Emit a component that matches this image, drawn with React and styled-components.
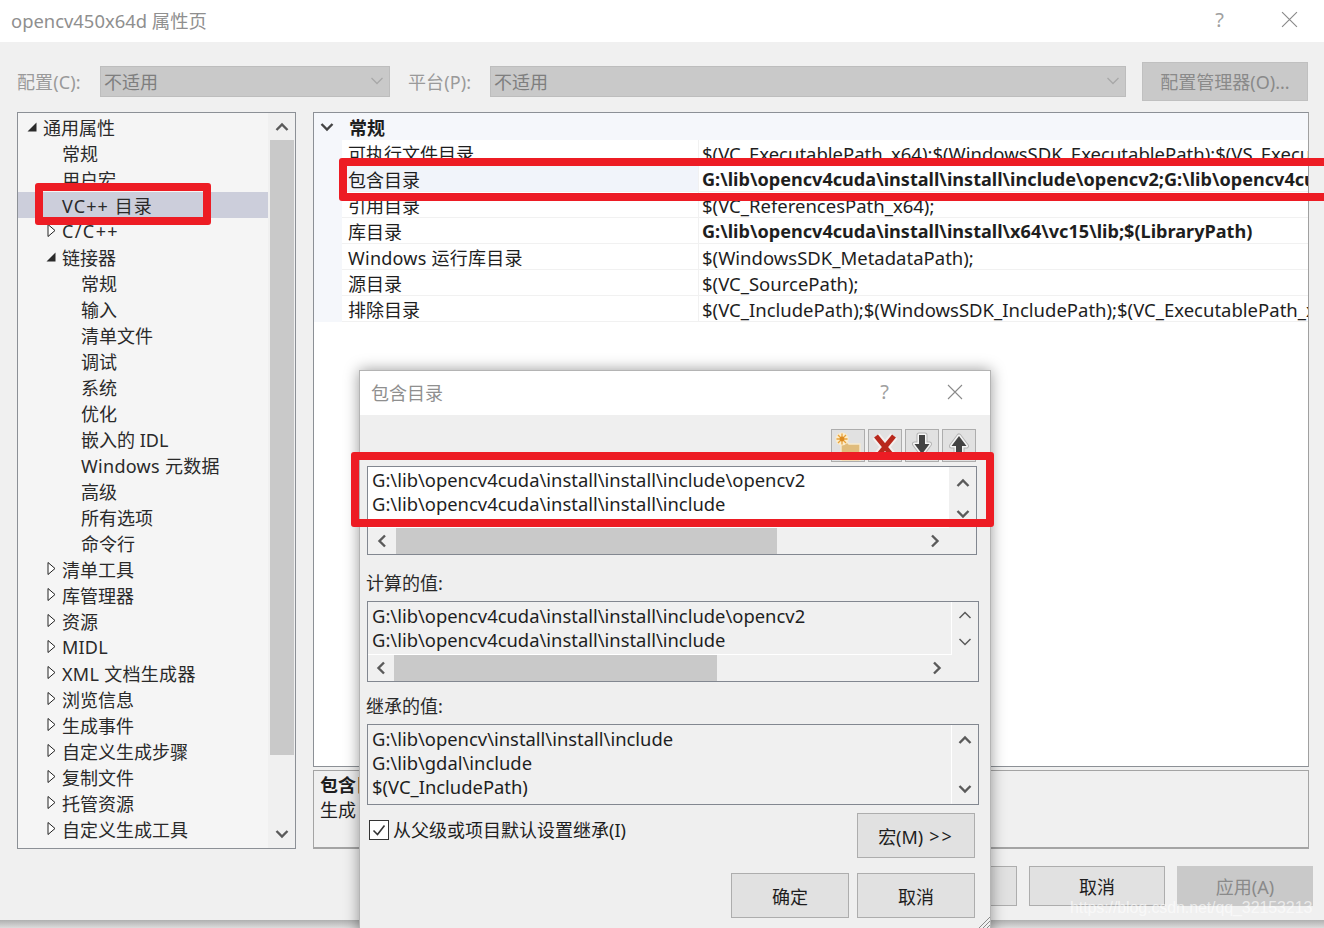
import React from 'react'
import styled, { createGlobalStyle } from 'styled-components'

const Global = createGlobalStyle`
  html, body { margin: 0; padding: 0; }
  body {
    width: 1324px;
    height: 928px;
    overflow: hidden;
    background: #d4d4d4;
    font-family: "Noto Sans", "Noto Sans CJK SC", sans-serif;
    font-size: 18px;
    color: #1e1e1e;
  }
`

const Page = styled.div`
  position: relative;
  width: 1324px;
  height: 928px;
  overflow: hidden;
`
const Window = styled.div`
  height: 920px;
  display: flex;
  flex-direction: column;
  background: #f0f0f0;
`
const WindowEdge = styled.div`
  height: 8px;
  background: linear-gradient(#b0b0b0, #dcdcdc);
`
const TitleBar = styled.div`
  height: ${p => p.$h}px;
  flex: none;
  box-sizing: border-box;
  background: #fff;
  display: flex;
  align-items: center;
  padding: 0 ${p => p.$right}px 3px ${p => p.$left}px;
  color: #8f8f8f;
  font-size: ${p => p.$size}px;
`
const TitleText = styled.span`
  flex: 1;
`
const TitleButtons = styled.div`
  display: flex;
  align-items: center;
  gap: ${p => p.$gap}px;
  color: #a0a0a0;
  font-size: 20px;
`
const ConfigRow = styled.div`
  height: 31px;
  margin-top: 24px;
  padding: 0 17px;
  display: flex;
  align-items: center;
  flex: none;
`
const ConfigLabel = styled.span`
  color: #9a9a9a;
  box-sizing: border-box;
  width: ${p => p.$w}px;
  padding: 0 0 2px ${p => p.$pad || 0}px;
  letter-spacing: 0.1px;
  flex: none;
`
const Combo = styled.div`
  width: ${p => p.$w}px;
  height: 31px;
  box-sizing: border-box;
  flex: none;
  background: #c9c9c9;
  border: 1px solid #bdbdbd;
  color: #7e7e7e;
  display: flex;
  align-items: center;
  justify-content: space-between;
  padding: 0 5px 2px 3px;
`
const ManagerButton = styled.div`
  margin-left: 16px;
  width: 166px;
  height: 39px;
  flex: none;
  background: #c9c9c9;
  border: 1px solid #c0c0c0;
  box-sizing: border-box;
  padding-bottom: 2px;
  color: #8a8a8a;
  display: flex;
  align-items: center;
  justify-content: center;
`
const MainRow = styled.div`
  margin-top: 15px;
  padding: 0 15px 0 17px;
  display: flex;
  gap: 17px;
  height: 737px;
  flex: none;
`
const Tree = styled.div`
  width: 279px;
  height: 737px;
  box-sizing: border-box;
  flex: none;
  border: 1px solid #8c9096;
  background: #f5f5f5;
  display: flex;
`
const TreeList = styled.div`
  width: 250px;
  padding-top: 1px;
  flex: none;
  overflow: hidden;
`
const TreeRow = styled.div`
  height: 26px;
  box-sizing: border-box;
  display: flex;
  align-items: center;
  white-space: nowrap;
  padding: 0 0 1px ${p => p.$indent}px;
  letter-spacing: ${p => p.$track || 0}px;
  background: ${p => (p.$selected ? '#cccedb' : 'transparent')};
  color: #2a2a2a;
`
const Caret = styled.span`
  width: 16px;
  margin-left: -19px;
  margin-right: 3px;
  display: flex;
  align-items: center;
  justify-content: center;
  flex: none;
`
const VScroll = styled.div`
  width: ${p => p.$w}px;
  flex: none;
  display: flex;
  flex-direction: column;
  align-items: center;
  justify-content: space-between;
  background: #f0f0f0;
`
const VThumb = styled.div`
  width: 24px;
  height: ${p => p.$h}px;
  margin-bottom: auto;
  background: #c9c9c9;
`
const ArrowCell = styled.div`
  height: ${p => p.$h}px;
  display: flex;
  align-items: center;
  justify-content: center;
  flex: none;
`
const RightCol = styled.div`
  width: 996px;
  flex: none;
  display: flex;
  flex-direction: column;
  gap: 3px;
`
const Grid = styled.div`
  height: 655px;
  box-sizing: border-box;
  flex: none;
  border: 1px solid #8c9096;
  border-right-color: #a0a0a0;
  background: #fff;
  overflow: hidden;
`
const GroupHead = styled.div`
  height: 27px;
  background: #f5f7fb;
  display: flex;
  align-items: center;
  font-weight: 700;
  padding-left: 6px;
  gap: 15px;
`
const GridRow = styled.div`
  height: 26px;
  box-sizing: border-box;
  display: flex;
  white-space: nowrap;
`
const Gutter = styled.div`
  width: 28px;
  flex: none;
  background: #f5f7fb;
`
const NameCell = styled.div`
  width: 356px;
  flex: none;
  padding: 1px 0 0 6px;
  box-sizing: border-box;
  line-height: 27px;
  letter-spacing: ${p => p.$track || 0}px;
  border-bottom: 1px solid #f1f1f1;
  background: ${p => (p.$active ? '#f1f4fa' : '#fff')};
`
const ValueCell = styled.div`
  flex: 1;
  min-width: 0;
  overflow: hidden;
  padding: 1px 0 0 3px;
  font-size: ${p => (p.$bold ? 18.1 : 18.5)}px;
  line-height: 25px;
  border-left: 1px solid #f1f1f1;
  border-bottom: 1px solid #f1f1f1;
  font-weight: ${p => (p.$bold ? 700 : 400)};
`
const Description = styled.div`
  height: 79px;
  box-sizing: border-box;
  border: 1px solid #a4a4a4;
  border-bottom-width: 2px;
  padding: 2px 6px;
  line-height: 25px;
  overflow: hidden;
`
const DescTitle = styled.div`
  font-weight: 700;
`
const BottomRow = styled.div`
  margin-top: 17px;
  padding-right: 11px;
  display: flex;
  justify-content: flex-end;
  gap: 12px;
`
const Button = styled.div`
  width: ${p => p.$w}px;
  height: ${p => p.$h}px;
  box-sizing: border-box;
  background: ${p => (p.$disabled ? '#c9c9c9' : '#e1e1e1')};
  border: 1px solid ${p => (p.$disabled ? '#c9c9c9' : '#adadad')};
  color: ${p => (p.$disabled ? '#8a8a8a' : '#1e1e1e')};
  display: flex;
  align-items: center;
  justify-content: center;
`
const Chevrons = styled.span`
  margin-left: 6px;
  letter-spacing: 2px;
`
const Watermark = styled.div`
  position: absolute;
  left: 1070px;
  top: 899px;
  font-family: "Liberation Sans", sans-serif;
  font-size: 16px;
  letter-spacing: -0.1px;
  color: rgba(255, 255, 255, 0.62);
  white-space: nowrap;
`

const Dialog = styled.div`
  position: absolute;
  left: 359px;
  top: 370px;
  width: 632px;
  height: 570px;
  box-sizing: border-box;
  border: 1px solid #b4b4b4;
  background: #efefef;
  box-shadow: 0 0 14px rgba(0, 0, 0, 0.4);
`
const DialogBody = styled.div`
  padding: 14px 14px 0 7px;
`
const ToolRow = styled.div`
  display: flex;
  justify-content: flex-end;
  gap: 3px;
  height: 37px;
`
const ToolButton = styled.div`
  width: 34px;
  height: 33px;
  box-sizing: border-box;
  background: #e1e1e1;
  border: 1px solid #adadad;
  display: flex;
  align-items: center;
  justify-content: center;
`
const ListBox = styled.div`
  width: ${p => p.$w}px;
  height: ${p => p.$h}px;
  box-sizing: border-box;
  border: 1px solid #828790;
  background: #f0f0f0;
  display: flex;
  flex-direction: column;
`
const ListTop = styled.div`
  flex: 1;
  min-height: 0;
  display: flex;
`
const ListLines = styled.div`
  flex: 1;
  min-width: 0;
  box-sizing: border-box;
  background: ${p => (p.$readonly ? '#f0f0f0' : '#fff')};
  padding: ${p => (p.$readonly ? 2 : 1)}px 0 0 4px;
  border-right: 1px solid ${p => (p.$readonly ? '#fff' : 'transparent')};
  border-bottom: 1px solid ${p => (p.$underline ? '#fff' : 'transparent')};
  font-size: 18.4px;
  line-height: 24px;
  white-space: nowrap;
  overflow: hidden;
`
const HScroll = styled.div`
  height: ${p => p.$h}px;
  flex: none;
  display: flex;
  align-items: center;
  background: #f0f0f0;
`
const HThumb = styled.div`
  height: 100%;
  width: ${p => p.$w}px;
  flex: none;
  background: #c9c9c9;
`
const SideArrow = styled.div`
  width: ${p => p.$w}px;
  flex: none;
  display: flex;
  align-items: center;
  justify-content: center;
`
const FieldLabel = styled.div`
  height: ${p => p.$h}px;
  box-sizing: border-box;
  margin-left: -1px;
  padding-bottom: 5px;
  display: flex;
  align-items: flex-end;
  line-height: 26px;
  color: #2a2a2a;
`
const CheckRow = styled.div`
  display: flex;
  justify-content: space-between;
  padding: 8px 1px 0 2px;
  height: 53px;
  box-sizing: border-box;
`
const CheckLabel = styled.label`
  display: flex;
  align-items: flex-start;
  gap: 4px;
  line-height: 20px;
  padding-top: 7px;
`
const CheckBox = styled.span`
  width: 20px;
  height: 20px;
  box-sizing: border-box;
  border: 1px solid #333;
  background: #fff;
  display: flex;
  align-items: center;
  justify-content: center;
`
const DialogButtons = styled.div`
  display: flex;
  justify-content: flex-end;
  gap: 8px;
  margin-top: 15px;
  padding-right: 1px;
`
const Grip = styled.svg`
  position: absolute;
  left: 978px;
  top: 916px;
`
const Marker = styled.div`
  position: absolute;
  left: ${p => p.$x}px;
  top: ${p => p.$y}px;
  width: ${p => p.$w}px;
  height: ${p => p.$h}px;
  box-sizing: border-box;
  border: 8px solid #ed1c24;
  border-radius: 3px;
`

const Up = ({ color = '#5a5a5a', weight = 2.4 }) => (
  <svg width="14" height="10" viewBox="0 0 14 10">
    <path d="M1.5 8 7 2.5 12.5 8" fill="none" stroke={color} strokeWidth={weight} />
  </svg>
)
const Down = ({ color = '#5a5a5a', weight = 2.4 }) => (
  <svg width="14" height="10" viewBox="0 0 14 10">
    <path d="M1.5 2 7 7.5 12.5 2" fill="none" stroke={color} strokeWidth={weight} />
  </svg>
)
const Left = () => (
  <svg width="10" height="14" viewBox="0 0 10 14">
    <path d="M8 1.5 2.5 7 8 12.5" fill="none" stroke="#5a5a5a" strokeWidth="2.4" />
  </svg>
)
const Right = () => (
  <svg width="10" height="14" viewBox="0 0 10 14">
    <path d="M2 1.5 7.5 7 2 12.5" fill="none" stroke="#5a5a5a" strokeWidth="2.4" />
  </svg>
)
const Closed = () => (
  <svg width="9" height="15" viewBox="0 0 9 15">
    <path d="M1 1.5 8 7.5 1 13.5Z" fill="#fff" stroke="#222" strokeWidth="1" />
  </svg>
)
const Open = () => (
  <svg width="10" height="10" viewBox="0 0 10 10">
    <path d="M9.5 0.5V9.5H0.5Z" fill="#2a2a2a" />
  </svg>
)
const CloseX = ({ size, color }) => (
  <svg width={size} height={size} viewBox="0 0 16 16">
    <path d="M1 1 15 15M15 1 1 15" stroke={color} strokeWidth="1.1" fill="none" />
  </svg>
)

const NewFolder = () => (
  <svg width="30" height="30" viewBox="0 0 30 30">
    <path d="M8 11h6l2 2h11v17H8Z" fill="#e0bc7c" stroke="#f6ead0" strokeWidth="1.4" />
    <circle cx="9" cy="8" r="6.5" fill="#fbeccb" />
    <path d="M9 2.5v11M3.5 8h11M5 4l8 8M13 4l-8 8" stroke="#e8a33c" strokeWidth="1.3" />
    <circle cx="9" cy="8" r="2.4" fill="#dd8a20" />
  </svg>
)
const Delete = () => (
  <svg width="30" height="30" viewBox="0 0 30 30">
    <path d="M6 5 24 27M24 5 6 27" stroke="#f4f0ee" strokeWidth="9" fill="none" />
    <path d="M6 5 24 27M24 5 6 27" stroke="#b8281c" strokeWidth="5" fill="none" />
  </svg>
)
const downArrow = 'M7 3h6v9h4.500L10 22 2.500 12H7Z'
const upArrow = 'M7 28V14H2.500L10 4l7.500 10H13v14Z'
const HaloArrow = ({ d }) => (
  <svg width="20" height="28" viewBox="0 0 20 28">
    <path d={d} fill="none" stroke="#b4b4b4" strokeWidth="5" strokeLinejoin="round" />
    <path d={d} fill="none" stroke="#f6f6f6" strokeWidth="3" strokeLinejoin="round" />
    <path d={d} fill="#444" />
  </svg>
)

const tree = [
  { t: '通用属性', i: 25, open: true },
  { t: '常规', i: 44 },
  { t: '用户宏', i: 44 },
  { t: 'VC++ 目录', i: 44, selected: true, track: 1.1 },
  { t: 'C/C++', i: 44, closed: true, track: 1.4 },
  { t: '链接器', i: 44, open: true },
  { t: '常规', i: 63 },
  { t: '输入', i: 63 },
  { t: '清单文件', i: 63 },
  { t: '调试', i: 63 },
  { t: '系统', i: 63 },
  { t: '优化', i: 63 },
  { t: '嵌入的 IDL', i: 63 },
  { t: 'Windows 元数据', i: 63, track: 0.3 },
  { t: '高级', i: 63 },
  { t: '所有选项', i: 63 },
  { t: '命令行', i: 63 },
  { t: '清单工具', i: 44, closed: true },
  { t: '库管理器', i: 44, closed: true },
  { t: '资源', i: 44, closed: true },
  { t: 'MIDL', i: 44, closed: true, track: 0.2 },
  { t: 'XML 文档生成器', i: 44, closed: true, track: 0.3 },
  { t: '浏览信息', i: 44, closed: true },
  { t: '生成事件', i: 44, closed: true },
  { t: '自定义生成步骤', i: 44, closed: true },
  { t: '复制文件', i: 44, closed: true },
  { t: '托管资源', i: 44, closed: true },
  { t: '自定义生成工具', i: 44, closed: true },
]

const rows = [
  { n: '可执行文件目录', v: '$(VC_ExecutablePath_x64);$(WindowsSDK_ExecutablePath);$(VS_ExecutablePath);$(MSBuild_ExecutablePath)' },
  { n: '包含目录', v: 'G:\\lib\\opencv4cuda\\install\\install\\include\\opencv2;G:\\lib\\opencv4cuda\\install\\install\\include;$(IncludePath)', bold: true, active: true },
  { n: '引用目录', v: '$(VC_ReferencesPath_x64);' },
  { n: '库目录', v: 'G:\\lib\\opencv4cuda\\install\\install\\x64\\vc15\\lib;$(LibraryPath)', bold: true },
  { n: 'Windows 运行库目录', v: '$(WindowsSDK_MetadataPath);', track: 0.25 },
  { n: '源目录', v: '$(VC_SourcePath);' },
  { n: '排除目录', v: '$(VC_IncludePath);$(WindowsSDK_IncludePath);$(VC_ExecutablePath_x64);$(VC_LibraryPath_x64)' },
]

export default function App() {
  return (
    <Page>
      <Global />
      <Window>
        <TitleBar $h={42} $left={11} $right={26} $size={18.4}>
          <TitleText>opencv450x64d 属性页</TitleText>
          <TitleButtons $gap={57}>
            <span>?</span>
            <CloseX size={17} color="#8a8a8a" />
          </TitleButtons>
        </TitleBar>
        <ConfigRow>
          <ConfigLabel $w={83}>配置(C):</ConfigLabel>
          <Combo $w={290}>不适用<Down color="#a8a8a8" weight={1.3} /></Combo>
          <ConfigLabel $w={100} $pad={18}>平台(P):</ConfigLabel>
          <Combo $w={636}>不适用<Down color="#a8a8a8" weight={1.3} /></Combo>
          <ManagerButton>配置管理器(O)...</ManagerButton>
        </ConfigRow>
        <MainRow>
          <Tree>
            <TreeList>
              {tree.map((r, i) => (
                <TreeRow key={i} $indent={r.i} $selected={r.selected} $track={r.track}>
                  {r.open && <Caret><Open /></Caret>}
                  {r.closed && <Caret><Closed /></Caret>}
                  {r.t}
                </TreeRow>
              ))}
            </TreeList>
            <VScroll $w={27}>
              <ArrowCell $h={27}><Up /></ArrowCell>
              <VThumb $h={615} />
              <ArrowCell $h={28}><Down /></ArrowCell>
            </VScroll>
          </Tree>
          <RightCol>
            <Grid>
              <GroupHead>
                <Down color="#444" />
                常规
              </GroupHead>
              {rows.map(r => (
                <GridRow key={r.n}>
                  <Gutter />
                  <NameCell $active={r.active} $track={r.track}>{r.n}</NameCell>
                  <ValueCell $bold={r.bold}>{r.v}</ValueCell>
                </GridRow>
              ))}
            </Grid>
            <Description>
              <DescTitle>包含目录</DescTitle>
              生成 VC++ 项目期间，搜索包含文件时使用的路径。
            </Description>
          </RightCol>
        </MainRow>
        <BottomRow>
          <Button $w={136} $h={40}>确定</Button>
          <Button $w={136} $h={40}>取消</Button>
          <Button $w={136} $h={40} $disabled>应用(A)</Button>
        </BottomRow>
      </Window>
      <WindowEdge />
      <Watermark>https://blog.csdn.net/qq_32153213</Watermark>

      <Dialog>
        <TitleBar $h={44} $left={11} $right={27} $size={18}>
          <TitleText>包含目录</TitleText>
          <TitleButtons $gap={58}>
            <span>?</span>
            <CloseX size={16} color="#8a8a8a" />
          </TitleButtons>
        </TitleBar>
        <DialogBody>
          <ToolRow>
            <ToolButton><NewFolder /></ToolButton>
            <ToolButton><Delete /></ToolButton>
            <ToolButton><HaloArrow d={downArrow} /></ToolButton>
            <ToolButton><HaloArrow d={upArrow} /></ToolButton>
          </ToolRow>
          <ListBox $w={610} $h={89}>
            <ListTop>
              <ListLines>
                G:\lib\opencv4cuda\install\install\include\opencv2<br />
                G:\lib\opencv4cuda\install\install\include
              </ListLines>
              <VScroll $w={27}>
                <ArrowCell $h={31}><Up /></ArrowCell>
                <ArrowCell $h={31}><Down /></ArrowCell>
              </VScroll>
            </ListTop>
            <HScroll $h={26}>
              <SideArrow $w={28}><Left /></SideArrow>
              <HThumb $w={381} />
              <SideArrow $w={316}><Right /></SideArrow>
            </HScroll>
          </ListBox>
          <FieldLabel $h={46}>计算的值:</FieldLabel>
          <ListBox $w={612} $h={81}>
            <ListTop>
              <ListLines $readonly $underline>
                G:\lib\opencv4cuda\install\install\include\opencv2<br />
                G:\lib\opencv4cuda\install\install\include
              </ListLines>
              <VScroll $w={26}>
                <ArrowCell $h={26}><Up weight={1.5} /></ArrowCell>
                <ArrowCell $h={26}><Down weight={1.5} /></ArrowCell>
              </VScroll>
            </ListTop>
            <HScroll $h={26}>
              <SideArrow $w={26}><Left /></SideArrow>
              <HThumb $w={323} />
              <SideArrow $w={440}><Right /></SideArrow>
            </HScroll>
          </ListBox>
          <FieldLabel $h={42}>继承的值:</FieldLabel>
          <ListBox $w={612} $h={81}>
            <ListTop>
              <ListLines $readonly>
                G:\lib\opencv\install\install\include<br />
                G:\lib\gdal\include<br />
                $(VC_IncludePath)
              </ListLines>
              <VScroll $w={26}>
                <ArrowCell $h={30}><Up /></ArrowCell>
                <ArrowCell $h={30}><Down /></ArrowCell>
              </VScroll>
            </ListTop>
          </ListBox>
          <CheckRow>
            <CheckLabel>
              <CheckBox>
                <svg width="16" height="16" viewBox="0 0 16 16">
                  <path d="M2.500 8.500 6.500 12.500 13.500 3.500" fill="none" stroke="#333" strokeWidth="1.6" />
                </svg>
              </CheckBox>
              从父级或项目默认设置继承(I)
            </CheckLabel>
            <Button $w={118} $h={45}>宏(M)<Chevrons>&gt;&gt;</Chevrons></Button>
          </CheckRow>
          <DialogButtons>
            <Button $w={118} $h={45}>确定</Button>
            <Button $w={118} $h={45}>取消</Button>
          </DialogButtons>
        </DialogBody>
      </Dialog>
      <Grip width="13" height="12" viewBox="0 0 13 12">
        <path d="M12 1 1 12M12 5 5 12M12 9 9 12" stroke="#8a8a8a" strokeWidth="1" />
      </Grip>

      <Marker $x={35} $y={183} $w={176} $h={42} />
      <Marker $x={339} $y={158} $w={1010} $h={43} />
      <Marker $x={351} $y={452} $w={643} $h={75} />
    </Page>
  )
}
